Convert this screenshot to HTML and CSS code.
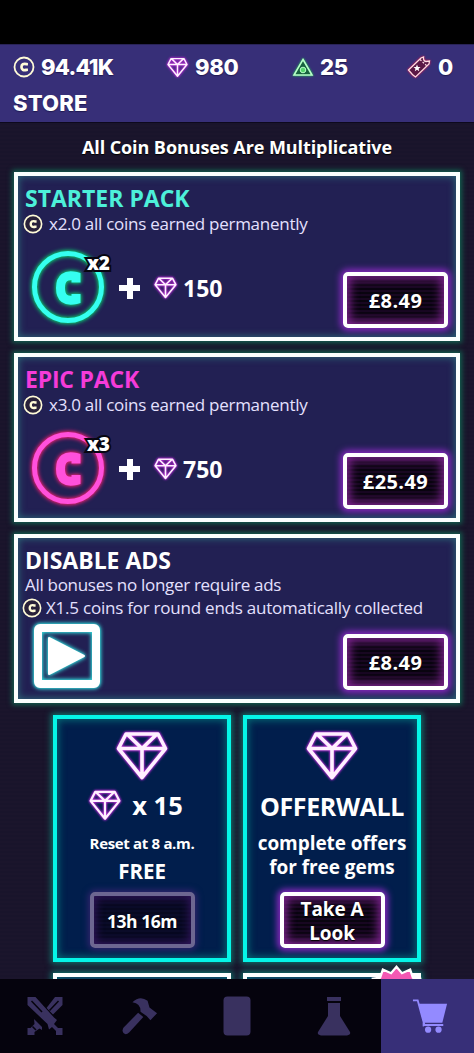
FILE: index.html
```html
<!DOCTYPE html>
<html lang="en">
<head>
<meta charset="utf-8">
<title>Store</title>
<link rel="stylesheet" href="styles.css">
</head>
<body>
<svg class="defs" width="0" height="0" aria-hidden="true">
  <symbol id="gem" viewBox="0 0 52 50"><path d="M10 3H42L49.500 17.500L26 46.500L2.500 17.500ZM2.500 17.500H49.500M11 3L26 17.500L41 3M26 17.500V46"/></symbol>
  <symbol id="coin" viewBox="0 0 22 22"><circle cx="11" cy="11" r="9.500"/><path d="M13.600 9.500V8.100Q8.500 7 8.500 11T13.600 14V12.600" class="coin-c"/></symbol>
  <symbol id="bigcoin" viewBox="0 0 76 76"><circle cx="38" cy="38" r="33.500"/><path d="M46 33.500V27.500Q30.500 24 30.500 39T46 50.500V45" class="big-c"/></symbol>
</svg>
<div class="phone">
  <div class="status"></div>
  <header class="header">
    <div class="stats">
      <div class="stat"><svg class="coin hcoin"><use href="#coin"/></svg><span class="n1">94.41K</span></div>
      <div class="stat"><svg class="gem hgem"><use href="#gem"/></svg><span class="n2">980</span></div>
      <div class="stat"><svg class="tri" viewBox="0 0 22 20"><path d="M11 2.500L20 18H2Z"/><circle cx="11" cy="13" r="2.800"/></svg><span class="n3">25</span></div>
      <div class="stat"><svg class="ticket" viewBox="0 0 24 24"><path d="M1.500 15L14 3L16.500 2Q16 6 19 6.500L22.500 6L22 9L8.500 22L6 20L5 19Z"/><path class="dash" d="M13 4.500L20 11"/><path class="star" d="M10 9.500l1 2.400 2.600.1-2 1.700.7 2.500-2.300-1.400-2.200 1.400.7-2.500-2-1.700 2.500-.1z"/></svg><span class="n4">0</span></div>
    </div>
    <h1>STORE</h1>
  </header>
  <main class="store">
    <p class="notice">All Coin Bonuses Are Multiplicative</p>
    <section class="card">
      <h2 class="aqua t1">STARTER PACK</h2>
      <p class="desc"><svg class="coin"><use href="#coin"/></svg><span class="d1">x2.0 all coins earned permanently</span></p>
      <div class="bundle">
        <div class="medal"><svg class="big cyan"><use href="#bigcoin"/></svg><b>x2</b></div>
        <i class="plus"></i><svg class="gem mgem"><use href="#gem"/></svg><span class="amount">150</span>
      </div>
      <button class="buy">£8.49</button>
    </section>
    <section class="card">
      <h2 class="pink t2">EPIC PACK</h2>
      <p class="desc"><svg class="coin"><use href="#coin"/></svg><span class="d1">x3.0 all coins earned permanently</span></p>
      <div class="bundle">
        <div class="medal"><svg class="big magenta"><use href="#bigcoin"/></svg><b>x3</b></div>
        <i class="plus"></i><svg class="gem mgem"><use href="#gem"/></svg><span class="amount">750</span>
      </div>
      <button class="buy">£25.49</button>
    </section>
    <section class="card ads">
      <h2 class="t3">DISABLE ADS</h2>
      <p class="desc first"><span class="d2">All bonuses no longer require ads</span></p>
      <p class="desc second"><svg class="coin"><use href="#coin"/></svg><span class="d3">X1.5 coins for round ends automatically collected</span></p>
      <svg class="play" viewBox="0 0 70 68"><rect x="6" y="6" width="58" height="56" rx="2"/><path d="M17 16V52L52 34Z"/></svg>
      <button class="buy">£8.49</button>
    </section>
    <div class="offers">
      <section class="offer">
        <svg class="gem lgem"><use href="#gem"/></svg>
        <div class="count"><svg class="gem cgem"><use href="#gem"/></svg><span>x 15</span></div>
        <p class="reset">Reset at 8 a.m.</p>
        <p class="free">FREE</p>
        <button class="buy wait">13h 16m</button>
      </section>
      <section class="offer">
        <svg class="gem lgem"><use href="#gem"/></svg>
        <h3>OFFERWALL</h3>
        <p class="blurb">complete offers<br>for free gems</p>
        <button class="buy look">Take A<br>Look</button>
      </section>
      <section class="offer next"></section>
      <section class="offer next"><svg class="burst" viewBox="0 0 56 56"><path d="M28 2L34 9L43 5L46 14L54 15L52 24L55 30L48 36L48 46L38 47L28 54L18 47L8 46L8 36L1 30L4 24L2 15L10 14L13 5L22 9Z"/></svg></section>
    </div>
  </main>
  <nav class="nav">
    <div><svg viewBox="0 0 36 40"><path d="M28 1H35.500V9L26 18.500L19.500 12Z"/><path class="cut" d="M31.500 5L22.500 14.500"/><path d="M7 23L15 31V34L12.500 32.500L7.500 36V39H0.500V32H3.500L7.500 28Z"/><path class="cut" d="M5.500 30.500L9 34"/><path class="edge" d="M0.500 1H8.500L27 21.500L30 24L27 28L31 32H35.500V39H29V35L25 31L22 33.500L20.500 28L0.500 9Z"/><path class="cut" d="M4.500 5L15 16"/></svg></div>
    <div><svg viewBox="0 0 38 40"><path d="M11 5.500Q19-2 27 4L29 11L37 17L30 24.500L26 20L19.500 15.500Q20 7 11 5.500Z"/><path d="M17 16.500L22.500 21L7.500 37.500Q4 40.500 1.500 38Q-.5 35 2 32Z"/></svg></div>
    <div><svg viewBox="0 0 36 40"><rect x="4.500" y="0.500" width="27" height="39" rx="4"/></svg></div>
    <div class="lab"><svg viewBox="0 0 36 40"><path d="M11 1H25V5H11ZM12 7H24V20L34 36Q35 39 31 39.500H5Q1 39 2 36L12 20Z"/></svg></div>
    <div class="active"><svg viewBox="0 0 38 40"><path d="M7 7H37L32 27H12Z"/><path class="line" d="M1 3.500H6L13 29M33 29.500H12"/><circle cx="17" cy="34.500" r="3.300"/><circle cx="28" cy="34.500" r="3.300"/><path class="thin" d="M12 27V31"/></svg></div>
  </nav>
</div>
</body>
</html>
```
FILE: styles.css
```css
* { box-sizing: border-box; margin: 0; padding: 0; }
body { background: #000; }
svg { display: block; flex: none; overflow: visible; }
.defs { position: absolute; }
.phone { width: 474px; height: 1053px; overflow: hidden; display: flex; flex-direction: column; background: #19142b; color: #fff; font-family: "Open Sans", "Noto Sans", sans-serif; font-weight: 700; }
.phone span { white-space: nowrap; }
.status { height: 44px; flex: none; background: #000; }
.header { height: 79px; flex: none; background: #372f78; border-top: 1px solid #292357; border-bottom: 1px solid #0d091d; padding: 7px 0 0 13px; font-family: Inter, sans-serif; font-weight: 800; text-shadow: 0 1px 1px #201950; }
.stats { display: grid; grid-template-columns: 153px 126px 115px auto; height: 30px; align-items: center; font-size: 22px; line-height: 30px; }
.stat { display: flex; align-items: center; }
.n1 { letter-spacing: -.75px; }
.n2, .n3 { letter-spacing: -.3px; }
h1 { font-size: 22px; line-height: 30px; font-weight: 800; margin-top: 6px; letter-spacing: .2px; }
.coin { width: 20px; height: 20px; fill: #29213a; stroke: #fffbd7; stroke-width: 1.8; }
.coin-c { fill: none; stroke-width: 2.7; }
.hcoin { width: 22px; height: 22px; margin-right: 6px; fill: none; }
.gem { fill: none; stroke: #fff0ff; stroke-width: 3.6; stroke-linejoin: round; filter: drop-shadow(0 0 1px #c52ddc) drop-shadow(0 0 1px #9025b8); }
.hgem { width: 21px; height: 21px; margin-left: 1px; margin-right: 7px; }
.tri { width: 22px; height: 20px; margin-right: 6px; fill: #17633f; stroke: #b8ffc9; stroke-width: 1.6; filter: drop-shadow(0 0 1px #19d94c); }
.tri circle { fill: #55d46d; stroke-width: 1; }
.ticket { width: 24px; height: 24px; margin-right: 7px; fill: #5b1745; stroke: #ffdbe2; stroke-width: 1.3; filter: drop-shadow(0 0 1px #ef1746); }
.dash { stroke-dasharray: 2 1.500; }
.star { fill: #fff; stroke: none; }

.store { flex: 1; min-height: 0; overflow: hidden; padding: 0 14px; background: repeating-linear-gradient(#19142b 0 2px, #1b152c 2px 4px); }
.notice { height: 49px; padding-top: 9px; line-height: 30px; font-size: 18px; letter-spacing: -.08px; text-align: center; text-shadow: 0 1px 1px #000; }
.card { position: relative; height: 169px; margin-bottom: 12px; padding: 8px 7px 0; border: 4px solid #fafffe; background: #222053; box-shadow: 0 0 5px 2px #12604f, inset 0 0 7px 1px #2b6475; }
h2 { height: 28px; line-height: 28px; font-size: 23px; white-space: nowrap; font-weight: 700; }
.t2 { letter-spacing: -.2px; }
.aqua { color: #4df0da; }
.pink { color: #f53bd9; }
.desc { display: flex; align-items: center; height: 23px; gap: 6px; font-weight: 400; font-size: 17px; line-height: 20px; color: #e5e0ff; margin-left: -2px; }
.d1 { letter-spacing: -.27px; }
.d2 { letter-spacing: -.3px; }
.d3 { letter-spacing: -.23px; }
.bundle { height: 78px; margin-top: 14px; display: flex; align-items: center; }
.medal { position: relative; width: 76px; height: 76px; margin: 0 13px 0 5px; }
.medal b { position: absolute; left: 57px; top: 2px; font-size: 19px; line-height: 22px; letter-spacing: -.2px; -webkit-text-stroke: 4px #070611; paint-order: stroke fill; }
.big { width: 76px; height: 76px; margin-top: -1px; fill: none; stroke: currentColor; stroke-width: 5; }
.big-c { stroke-width: 9; }
.cyan { color: #35fff0; filter: drop-shadow(0 0 2px #0daf4c) drop-shadow(0 0 1px #0db58a); }
.magenta { color: #ff50dc; filter: drop-shadow(0 0 2px #db2457) drop-shadow(0 0 1px #c41b83); }
.plus { width: 21px; height: 21px; flex: none; background: linear-gradient(#fff, #fff) center / 21px 6px no-repeat, linear-gradient(#fff, #fff) center / 6px 21px no-repeat; }
.mgem { width: 23px; height: 22px; margin: 0 6px 0 14px; }
.amount { font-size: 23px; }
.buy { position: absolute; right: 8px; bottom: 9px; width: 105px; height: 56px; padding-top: 2px; border: 4px solid #fff; border-radius: 5px; color: #fff; font: 700 20px/24px "Open Sans", sans-serif; letter-spacing: .4px; background: repeating-linear-gradient(#09040f 0 2px, #180721 2px 4px); box-shadow: 0 0 6px 3px #8429bd, inset 0 0 10px 3px #7c238e; text-shadow: 0 1px 1px #000; }
.ads .first { height: 22px; margin-left: 0; }
.ads .second { margin-left: -3px; gap: 4px; }
.play { width: 70px; height: 68px; margin: 3px 0 0 7px; filter: drop-shadow(0 0 2px #35d9db) drop-shadow(0 0 1px #2ebbc2); }
.play rect { fill: none; stroke: #fff; stroke-width: 8; }
.play path { fill: #fff; stroke: #fff; stroke-width: 2; stroke-linejoin: round; }

.offers { display: grid; grid-template-columns: 178px 178px; column-gap: 12px; row-gap: 11px; justify-content: center; }
.offer { position: relative; height: 247px; border: 4.5px solid #05f5e7; background: #011e4c; box-shadow: 0 0 6px 2px #10716a, inset 0 0 7px 2px #04616f; display: flex; flex-direction: column; align-items: center; text-align: center; padding-top: 12px; }
.lgem { width: 52px; height: 50px; margin-bottom: 6px; }
.count { display: flex; align-items: center; gap: 11px; height: 36px; font-size: 25.5px; margin-right: 12px; }
.cgem { width: 32px; height: 31px; }
.reset { font-size: 15px; letter-spacing: -.33px; line-height: 24px; margin-top: 8px; font-weight: 700; }
.free { font-size: 20.5px; line-height: 28px; margin-top: 2px; }
.offer .buy { position: static; margin-top: 7px; flex: none; }
.offer .wait { border-color: #6d6691; font-size: 17.5px; letter-spacing: -.5px; background: repeating-linear-gradient(#070820 0 2px, #0a0b28 2px 4px); box-shadow: 0 0 6px 2px #30246e, inset 0 0 9px 2px #30145b; }
h3 { font-size: 25px; letter-spacing: -.4px; line-height: 38px; height: 36px; font-weight: 700; }
.blurb { font-size: 19px; letter-spacing: -.05px; line-height: 24px; margin-top: 8px; white-space: nowrap; }
.offer .look { margin-top: 13px; padding-top: 2px; line-height: 23.5px; font-size: 19px; letter-spacing: -.1px; }
.next { border-color: #fff; background: #222053; }
.burst { position: absolute; left: 124px; top: -12px; width: 51px; height: 51px; fill: #f358b3; stroke: #fff; stroke-width: 2.500; }

.nav { height: 74px; flex: none; display: grid; grid-template-columns: 95px 95px 95px 96px 93px; position: relative; background: #05030d; }
.nav div { display: grid; place-items: center; }
.nav svg { width: 36px; height: 40px; fill: #39315f; margin-left: -6px; }
.nav div:nth-child(3) svg { margin-left: -2px; }
.nav .lab svg { margin-left: 1px; }
.nav .cut { fill: none; stroke: #05030d; stroke-width: 1.5; }
.nav .edge { stroke: #05030d; stroke-width: 1.5; paint-order: stroke; }
.nav .active { background: #372f78; }
.nav .active svg { fill: #938aff; margin-left: 5px; }
.line { fill: none; stroke: #938aff; stroke-width: 2; }
.thin { fill: none; stroke: #938aff; stroke-width: 1.500; }
```
